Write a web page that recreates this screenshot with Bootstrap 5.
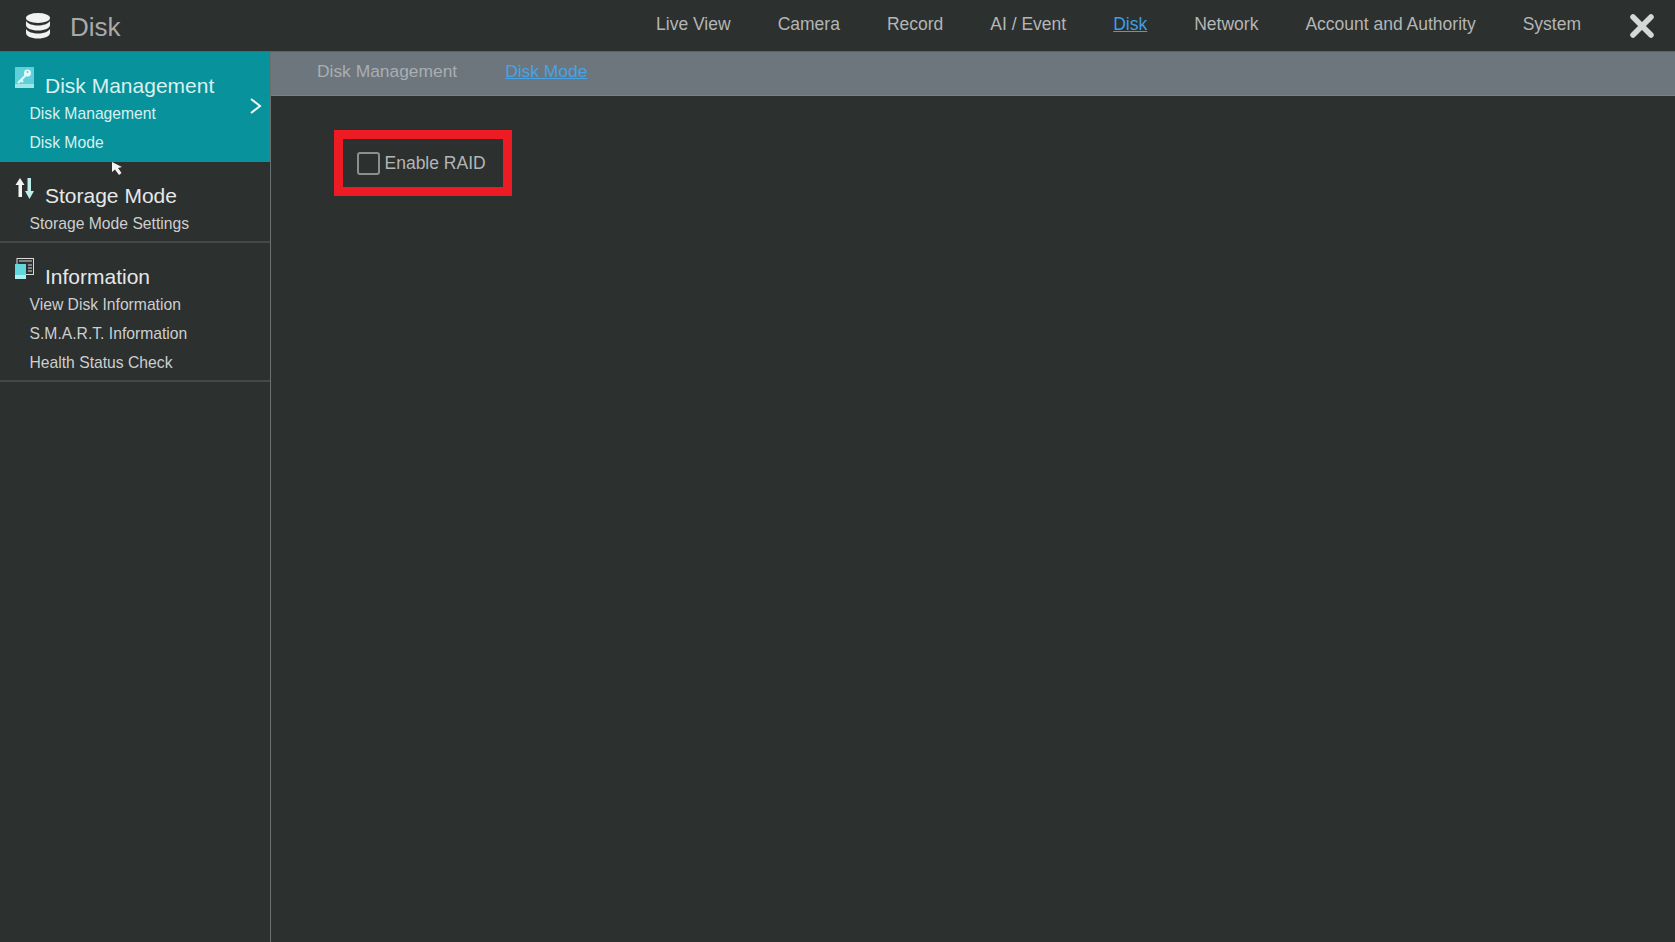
<!DOCTYPE html>
<html lang="en">
<head>
    <meta charset="UTF-8">
    <title>Disk</title>
    <link href="https://cdn.jsdelivr.net/npm/bootstrap@5.3.2/dist/css/bootstrap.min.css" rel="stylesheet">
    <style>
        body {
            background-color: #2c302f;
            font-family: "Liberation Sans", Arial, sans-serif;
            color: #c4c6c6;
            height: 942px;
            overflow: hidden;
        }
        .top-bar {
            height: 52px;
            flex-shrink: 0;
            border-bottom: 1px solid #5e6464;
        }
        .top-logo {
            margin-left: 26px;
            margin-top: 1px;
            width: 24px;
            height: 26px;
        }
        .top-title {
            margin-left: 20px;
            margin-top: 2px;
            font-size: 26px;
            color: #a8aaaa;
            line-height: 1;
        }
        .top-links {
            gap: 47px;
            margin-right: 49px;
            margin-top: -3px;
        }
        .top-links a {
            font-size: 17.5px;
            color: #b4b6b6;
            text-decoration: none;
        }
        .top-links a.current {
            color: #3f9fe0;
            text-decoration: underline;
        }
        .close-x {
            width: 24px;
            height: 24px;
            margin-right: 21px;
            margin-top: 1px;
        }
        .side-col {
            width: 271px;
            border-right: 1px solid #6b7071;
            flex-shrink: 0;
        }
        .side-group {
            border-bottom: 2px solid #444848;
            padding-bottom: 3.5px;
            position: relative;
        }
        .side-group.active {
            background-color: #08929b;
            border-bottom: 0;
            height: 110px;
            padding-bottom: 0;
            color: #d8f0f0;
        }
        .side-head {
            height: 46.5px;
            padding-left: 15px;
            padding-top: 15px;
        }
        .side-head svg {
            width: 19px;
            height: 22px;
            flex-shrink: 0;
        }
        .side-head span {
            margin-left: 11px;
            margin-top: 5.5px;
            font-size: 21px;
            line-height: 25px;
            color: #e6e8e8;
        }
        .active .side-head span {
            color: #d8f0f0;
        }
        .side-item {
            padding-left: 29.5px;
            font-size: 15.7px;
            line-height: 29px;
            color: #cdcfcf;
        }
        .active .side-item {
            color: #d8f0f0;
        }
        .side-arrow {
            position: absolute;
            right: 7px;
            top: 45px;
            width: 14px;
            height: 18px;
        }
        .sub-bar {
            height: 44px;
            background-color: #6d767d;
            border-bottom: 1px solid #7b8287;
            padding-left: 46px;
            padding-bottom: 4px;
            gap: 48px;
            font-size: 17.4px;
        }
        .sub-bar a {
            color: #a9aeb1;
            text-decoration: none;
        }
        .sub-bar a.current {
            color: #48a3e6;
            text-decoration: underline;
        }
        .raid-box {
            margin-top: 34px;
            margin-left: 63px;
            width: 178px;
            height: 66px;
            border: 9px solid #ed1c24;
            padding-left: 14px;
            gap: 4.5px;
            font-size: 17.5px;
            color: #b4b6b6;
        }
        .raid-box .form-check-input {
            width: 23px;
            height: 23px;
            margin: 0;
            background-color: transparent;
            border: 2px solid #8b8f8f;
            border-radius: 3px;
        }
        .mouse-arrow {
            position: absolute;
            left: 112px;
            top: 162px;
            width: 13px;
            height: 15px;
        }
    </style>
</head>
<body class="d-flex flex-column">
<div class="top-bar d-flex align-items-center">
    <svg class="top-logo" viewBox="0 0 24 26" fill="#f2f2f2">
        <ellipse cx="12" cy="5" rx="12" ry="5"/>
        <path d="M0 8c2 3 7 4.500 12 4.500S22 11 24 8v4c0 3-5 5.500-12 5.500S0 15 0 12z"/>
        <path d="M0 16c2 3 7 4.500 12 4.500S22 19 24 16v4c0 3-5 5.500-12 5.500S0 23 0 20z"/>
    </svg>
    <span class="top-title">Disk</span>
    <div class="top-links d-flex ms-auto">
        <a href="#">Live View</a>
        <a href="#">Camera</a>
        <a href="#">Record</a>
        <a href="#">AI / Event</a>
        <a href="#" class="current">Disk</a>
        <a href="#">Network</a>
        <a href="#">Account and Authority</a>
        <a href="#">System</a>
    </div>
    <svg class="close-x" viewBox="0 0 24 24" stroke="#d6d8d8" stroke-width="5.500" stroke-linecap="round">
        <path d="M3 3 21 21M21 3 3 21"/>
    </svg>
</div>

<div class="d-flex flex-grow-1">
    <div class="side-col">
        <div class="side-group active">
            <div class="side-head d-flex">
                <svg viewBox="0 0 19 22">
                    <rect width="19" height="21" fill="#5fd0da"/>
                    <rect y="17" width="19" height="4" fill="#9fe6e6"/>
                    <circle cx="12.500" cy="6" r="3.500" fill="#e8f8f8"/>
                    <circle cx="12.500" cy="5" r="1" fill="#5fd0da"/>
                    <path d="M11 8 3 16M6 13 8 15" stroke="#e8f8f8" stroke-width="2" fill="none"/>
                </svg>
                <span>Disk Management</span>
            </div>
            <div class="side-item">Disk Management</div>
            <div class="side-item">Disk Mode</div>
            <svg class="side-arrow" viewBox="0 0 14 18" fill="none" stroke="#f0f8f8" stroke-width="2">
                <path d="M2 2 11 9 2 16"/>
            </svg>
        </div>
        <div class="side-group">
            <div class="side-head d-flex">
                <svg viewBox="0 0 19 22">
                    <path d="M5 1 9.500 8H7V20H3.500V8H0.500z" fill="#f4f4f4"/>
                    <path d="M14.500 22 10 14H12.500V1H16V14H19z" fill="#bdeeea"/>
                </svg>
                <span>Storage Mode</span>
            </div>
            <div class="side-item">Storage Mode Settings</div>
        </div>
        <div class="side-group">
            <div class="side-head d-flex">
                <svg viewBox="0 0 19 22">
                    <rect x="2" y="0.500" width="16.500" height="16" fill="#2c302f" stroke="#d8dada"/>
                    <path d="M4 3H17M13 7H17M13 10H17M13 13H17" stroke="#d8dada"/>
                    <rect y="6" width="11" height="15" fill="#63d8dc"/>
                    <rect y="17" width="11" height="4" fill="#aef0ee"/>
                </svg>
                <span>Information</span>
            </div>
            <div class="side-item">View Disk Information</div>
            <div class="side-item">S.M.A.R.T. Information</div>
            <div class="side-item">Health Status Check</div>
        </div>
    </div>
    <div class="flex-grow-1">
        <div class="sub-bar d-flex align-items-center">
            <a href="#">Disk Management</a>
            <a href="#" class="current">Disk Mode</a>
        </div>
        <div class="raid-box d-flex align-items-center">
            <input class="form-check-input" type="checkbox" id="raid">
            <label for="raid">Enable RAID</label>
        </div>
    </div>
</div>

<svg class="mouse-arrow" viewBox="0 0 13 15" fill="#f4f4f4">
    <path d="M0 0 0 10 3 7.500 7 13 9.500 11 6 6 10 5z"/>
</svg>
</body>
</html>
